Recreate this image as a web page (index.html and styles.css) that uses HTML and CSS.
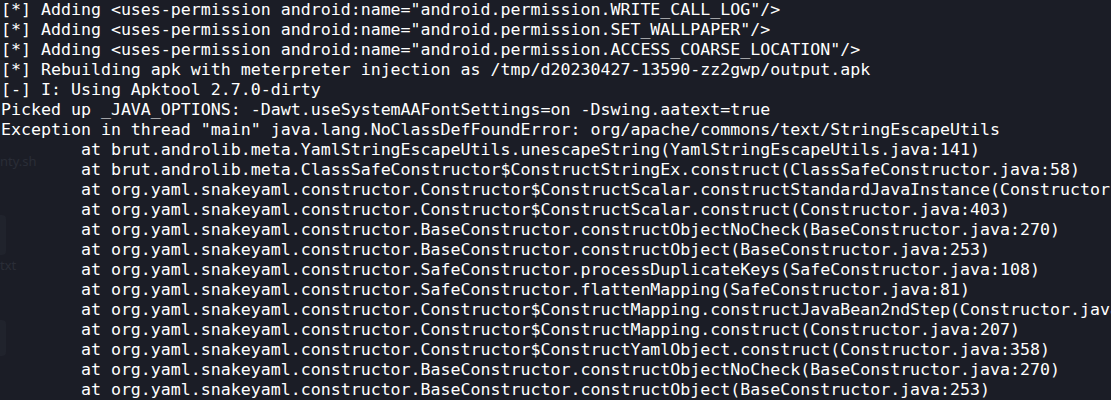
FILE: index.html
```html
<!DOCTYPE html>
<html>
<head>
<meta charset="utf-8">
<link rel="stylesheet" href="styles.css">
</head>
<body>
<div class="desktop">
  <div class="ghost-icon icon-a"></div>
  <div class="ghost-label label-a">nty.sh</div>
  <div class="ghost-icon icon-b"></div>
  <div class="ghost-label label-b">txt</div>
  <div class="ghost-icon icon-c"></div>
  <pre class="term">[*] Adding &lt;uses-permission android:name="android.permission.WRITE_CALL_LOG"/&gt;
[*] Adding &lt;uses-permission android:name="android.permission.SET_WALLPAPER"/&gt;
[*] Adding &lt;uses-permission android:name="android.permission.ACCESS_COARSE_LOCATION"/&gt;
[*] Rebuilding apk with meterpreter injection as /tmp/d20230427-13590-zz2gwp/output.apk
[-] I: Using Apktool 2.7.0-dirty
Picked up _JAVA_OPTIONS: -Dawt.useSystemAAFontSettings=on -Dswing.aatext=true
Exception in thread "main" java.lang.NoClassDefFoundError: org/apache/commons/text/StringEscapeUtils
        at brut.androlib.meta.YamlStringEscapeUtils.unescapeString(YamlStringEscapeUtils.java:141)
        at brut.androlib.meta.ClassSafeConstructor$ConstructStringEx.construct(ClassSafeConstructor.java:58)
        at org.yaml.snakeyaml.constructor.Constructor$ConstructScalar.constructStandardJavaInstance(Constructor.java:479)
        at org.yaml.snakeyaml.constructor.Constructor$ConstructScalar.construct(Constructor.java:403)
        at org.yaml.snakeyaml.constructor.BaseConstructor.constructObjectNoCheck(BaseConstructor.java:270)
        at org.yaml.snakeyaml.constructor.BaseConstructor.constructObject(BaseConstructor.java:253)
        at org.yaml.snakeyaml.constructor.SafeConstructor.processDuplicateKeys(SafeConstructor.java:108)
        at org.yaml.snakeyaml.constructor.SafeConstructor.flattenMapping(SafeConstructor.java:81)
        at org.yaml.snakeyaml.constructor.Constructor$ConstructMapping.constructJavaBean2ndStep(Constructor.java:292)
        at org.yaml.snakeyaml.constructor.Constructor$ConstructMapping.construct(Constructor.java:207)
        at org.yaml.snakeyaml.constructor.Constructor$ConstructYamlObject.construct(Constructor.java:358)
        at org.yaml.snakeyaml.constructor.BaseConstructor.constructObjectNoCheck(BaseConstructor.java:270)
        at org.yaml.snakeyaml.constructor.BaseConstructor.constructObject(BaseConstructor.java:253)</pre>
</div>
</body>
</html>
```
FILE: styles.css
```css
html, body {
  margin: 0;
  padding: 0;
  background: #1b1d26;
  overflow: hidden;
}
.desktop {
  position: relative;
  width: 1111px;
  height: 400px;
  overflow: hidden;
  background: #1b1d26;
}
.term {
  position: relative;
  margin: 0;
  padding: 0 0 0 1px;
  font-family: "DejaVu Sans Mono", "Liberation Mono", monospace;
  font-size: 16.6px;
  line-height: 20px;
  color: #ffffff;
  white-space: pre;
  tab-size: 8;
}
.ghost-icon {
  position: absolute;
  left: -30px;
  width: 36px;
  height: 40px;
  border-radius: 4px;
  background: #20232c;
}
.icon-a { top: 60px; }
.icon-b { top: 215px; }
.icon-c { top: 320px; height: 36px; }
.ghost-label {
  position: absolute;
  left: 0;
  font-family: "Noto Sans", sans-serif;
  font-size: 13px;
  color: #2a2d37;
}
.label-a { top: 152px; }
.label-b { top: 256px; }
```
